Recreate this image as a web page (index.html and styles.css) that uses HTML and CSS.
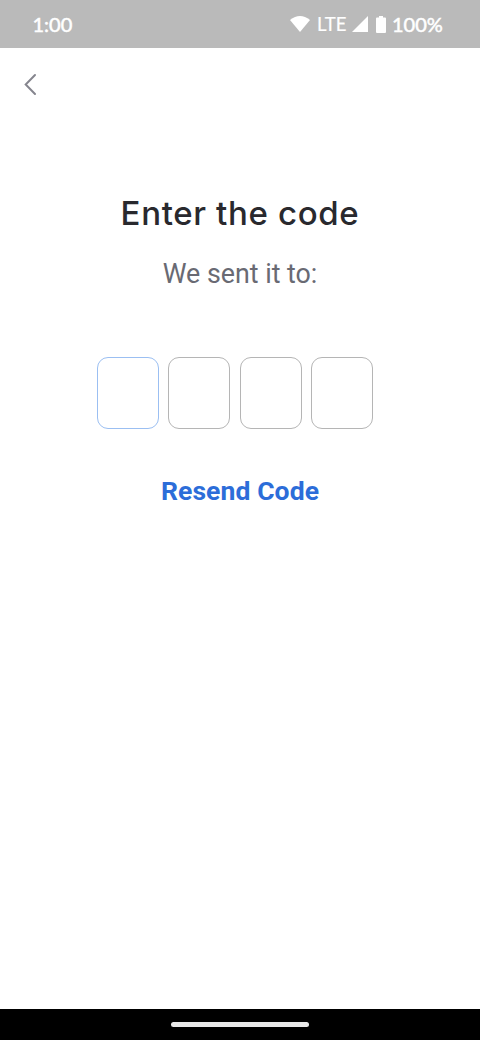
FILE: index.html
```html
<!DOCTYPE html>
<html lang="en">
<head>
<meta charset="utf-8">
<title>Enter the code</title>
<link rel="stylesheet" href="styles.css">
</head>
<body>
<div class="screen">
  <header class="status">
    <span class="time">1:00</span>
    <div class="indicators">
      <svg class="wifi" width="20" height="16" viewBox="0 0 20 16"><path d="M0 4Q10-4 20 4L10 16Z"/></svg>
      <span class="network">LTE</span>
      <svg class="signal" width="16" height="16" viewBox="0 0 16 16"><path d="M16 0V16H0Z"/></svg>
      <svg class="battery" width="10" height="17" viewBox="0 0 10 17"><path d="M3 0H7V1.5H9Q10 1.5 10 2.5V16Q10 17 9 17H1Q0 17 0 16V2.5Q0 1.500 1 1.500H3Z"/></svg>
      <span class="percent">100%</span>
    </div>
  </header>
  <nav class="toolbar">
    <svg width="14" height="24" viewBox="0 0 14 24"><path d="M12 3L2.700 12.500L12 22"/></svg>
  </nav>
  <main class="content">
    <h1 class="title">Enter the code</h1>
    <p class="subtitle">We sent it to:</p>
    <div class="code">
      <span class="digit active"></span>
      <span class="digit"></span>
      <span class="digit"></span>
      <span class="digit"></span>
    </div>
    <a class="resend">Resend Code</a>
  </main>
  <footer class="navbar"><span class="handle"></span></footer>
</div>
</body>
</html>
```
FILE: styles.css
```css
* { box-sizing: border-box; }
body { margin: 0; background: #fff; font-family: Roboto, sans-serif; }
.screen { width: 480px; height: 1040px; display: flex; flex-direction: column; overflow: hidden; }
.status {
  height: 48px; flex: none; display: flex; align-items: center; justify-content: space-between;
  padding: 0 36px 0 32.500px; background: #bababa; color: #fff;
  font-family: Lato, sans-serif; font-size: 20px; font-weight: 400;
}
.time, .percent { -webkit-text-stroke: 0.5px #fff; }
.indicators { display: flex; align-items: center; }
.indicators svg { fill: #fff; flex: none; }
.network { margin-left: 7px; width: 35px; font-size: 18.5px; -webkit-text-stroke: 0.2px #fff; }
.battery { margin-left: 8px; }
.percent { margin-left: 6px; width: 52px; white-space: nowrap; }
.toolbar { height: 72px; flex: none; display: flex; align-items: center; padding-left: 23px; }
.toolbar path { fill: none; stroke: #85858e; stroke-width: 2; stroke-linecap: round; }
.content { flex: 1; display: flex; flex-direction: column; align-items: center; }
.title {
  margin: 71px 0 0; line-height: 44px; white-space: nowrap; letter-spacing: 0.65px;
  font-family: Inter, sans-serif; font-size: 33px; font-weight: 500; color: #29292e;
}
.subtitle { margin: 23px 0 0; line-height: 32px; font-size: 26.8px; color: #696a73; }
.code { display: flex; gap: 9.600px; margin: 66.500px 10px 0 0; }
.digit { width: 62px; height: 72px; border: 1px solid #b5b5b5; border-radius: 11px; }
.digit.active { border-color: #9bbff2; }
.resend { margin-top: 46px; line-height: 32px; font-size: 26.500px; letter-spacing: 0.1px; font-weight: 700; color: #2c6dd9; }
.navbar {
  height: 31px; flex: none; display: flex; align-items: center; justify-content: center;
  background: #000;
}
.handle { width: 138px; height: 5px; border-radius: 3px; background: #e8e8e8; }
```
